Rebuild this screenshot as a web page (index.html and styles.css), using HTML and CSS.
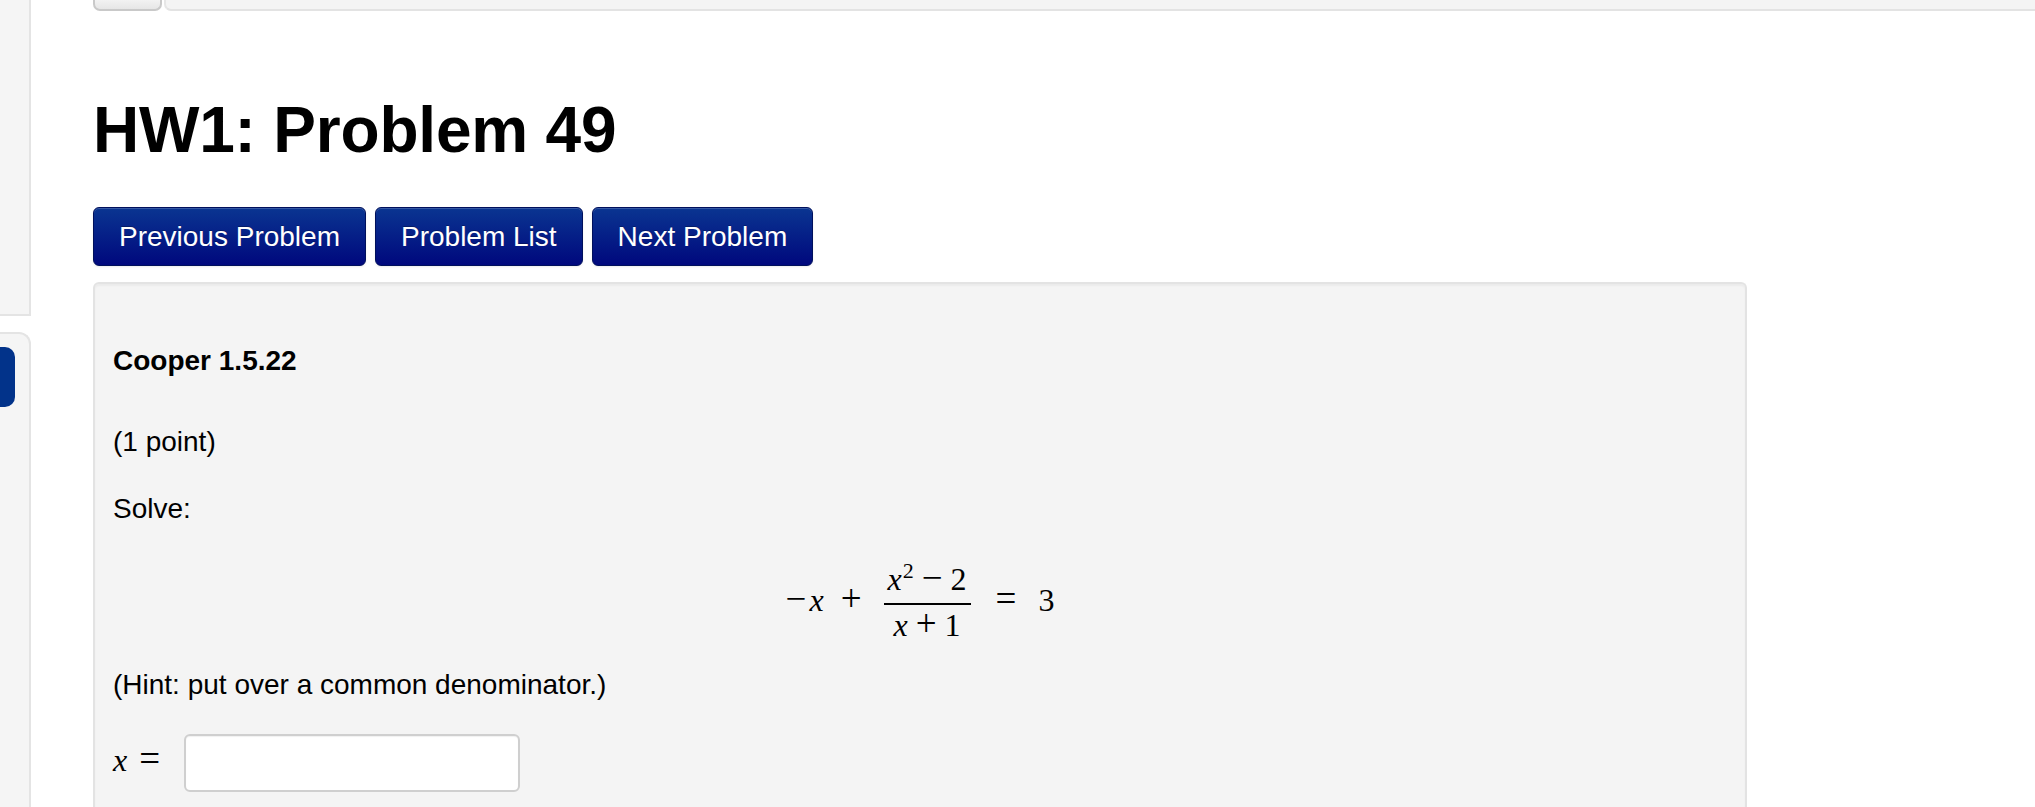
FILE: index.html
```html
<!DOCTYPE html>
<html lang="en">
<head>
<meta charset="utf-8">
<title>HW1: Problem 49</title>
<link rel="stylesheet" href="styles.css">
</head>
<body>
<div class="page">
  <aside class="sidebar">
    <div class="side-top"></div>
    <div class="side-bottom"><span class="side-tab"></span></div>
  </aside>
  <main class="main">
    <div class="topbar">
      <span class="top-btn"></span>
      <div class="top-strip"></div>
    </div>
    <h1 class="title">HW1: Problem 49</h1>
    <nav class="nav-btns">
      <a class="btn" href="#">Previous Problem</a>
      <a class="btn" href="#">Problem List</a>
      <a class="btn" href="#">Next Problem</a>
    </nav>
    <section class="problem">
      <p class="prob-title">Cooper 1.5.22</p>
      <p class="points">(1 point)</p>
      <p class="solve">Solve:</p>
      <div class="equation">
        <span class="mrow"><span class="mo">&minus;</span><span class="mi lead">x</span><span class="mo plus">+</span><span class="frac"><span class="num"><span class="mi">x</span><span class="sup">2</span><span class="mo bin">&minus;</span><span class="mn">2</span></span><span class="bar"></span><span class="den"><span class="mi">x</span><span class="mo bin">+</span><span class="mn">1</span></span></span><span class="mo eq">=</span><span class="mn">3</span></span>
      </div>
      <p class="hint">(Hint: put over a common denominator.)</p>
      <div class="answer-row">
        <span class="answer-label"><span class="mi">x</span><span class="mo ans-eq">=</span></span>
        <input class="answer" type="text" aria-label="answer">
      </div>
    </section>
  </main>
</div>
</body>
</html>
```

FILE: styles.css
```css
html, body {
  margin: 0;
  padding: 0;
  background: #ffffff;
}

body {
  font-family: "Liberation Sans", Arial, Helvetica, sans-serif;
  color: #000;
  overflow: hidden;
}

.page {
  display: flex;
  min-height: 807px;
}

/* ---------- left sidebar ---------- */
.sidebar {
  width: 31px;
  flex: none;
  display: flex;
  flex-direction: column;
}

.side-top {
  height: 316px;
  box-sizing: border-box;
  background: #f5f5f5;
  border-right: 2px solid #e4e4e4;
  border-bottom: 2px solid #e4e4e4;
}

.side-bottom {
  flex: 1;
  margin-top: 16px;
  box-sizing: border-box;
  background: #f5f5f5;
  border-top: 2px solid #e4e4e4;
  border-right: 2px solid #e4e4e4;
  border-top-right-radius: 12px;
  padding-top: 13px;
}

.side-tab {
  display: block;
  width: 15px;
  height: 60px;
  background: #02338a;
  border-radius: 0 10px 10px 0;
}

/* ---------- main column ---------- */
.main {
  flex: 1;
  margin-left: 62px;
  min-width: 0;
}

.topbar {
  display: flex;
  height: 11px;
}

.top-btn {
  width: 69px;
  box-sizing: border-box;
  background: linear-gradient(#f2f2f2, #e6e6e6);
  border: 2px solid #c9c9c9;
  border-top: none;
  border-radius: 0 0 7px 7px;
  margin-right: 2px;
}

.top-strip {
  flex: 1;
  box-sizing: border-box;
  background: #f4f4f4;
  border-left: 2px solid #e6e6e6;
  border-bottom: 2px solid #e3e3e3;
  border-bottom-left-radius: 7px;
}

.title {
  margin: 84px 0 0;
  font-size: 64px;
  line-height: 70px;
  font-weight: bold;
  letter-spacing: -0.2px;
}

.nav-btns {
  display: flex;
  gap: 9px;
  margin-top: 42px;
}

.btn {
  display: block;
  box-sizing: border-box;
  height: 59px;
  padding: 8px 25px;
  font-size: 28px;
  line-height: 41px;
  color: #fff;
  text-decoration: none;
  text-shadow: 0 -1px 0 rgba(0, 0, 0, 0.25);
  background: linear-gradient(#0a3591, #00087d);
  border: 1px solid #00105c;
  border-radius: 6px;
  box-shadow: inset 0 1px 0 rgba(255, 255, 255, 0.18), 0 1px 2px rgba(0, 0, 0, 0.08);
}

/* ---------- problem panel ---------- */
.problem {
  width: 1654px;
  box-sizing: border-box;
  margin-top: 16px;
  min-height: 540px;
  padding: 57px 18px 40px;
  background: #f4f4f4;
  border: 2px solid #e3e3e3;
  border-bottom: none;
  border-radius: 6px 6px 0 0;
  box-shadow: inset 0 2px 2px rgba(0, 0, 0, 0.04);
  font-size: 28px;
  line-height: 40px;
}

.problem p {
  margin: 0;
}

.prob-title {
  font-weight: bold;
}

.points {
  margin-top: 41px !important;
}

.solve {
  margin-top: 27px !important;
}

.hint {
  margin-top: 19px !important;
}

/* ---------- math ---------- */
.equation {
  margin-top: 33px;
  text-align: center;
  font-family: "Liberation Serif", "Times New Roman", serif;
  font-size: 32px;
  line-height: 32px;
}

.mi {
  font-style: italic;
}

.mo {
  font-size: 37px;
}

.lead {
  margin-left: 3px;
}

.plus {
  margin: 0 22px 0 17px;
}

.eq {
  margin: 0 22px 0 25px;
}

.frac {
  display: inline-flex;
  flex-direction: column;
  align-items: center;
  vertical-align: middle;
}

.num {
  padding: 0 4px 8px;
  line-height: 32px;
}

.den {
  padding: 3px 4px 5px;
  line-height: 32px;
}

.bar {
  align-self: stretch;
  height: 2px;
  background: #000;
}

.sup {
  font-size: 22px;
  line-height: 0;
  vertical-align: 12px;
  margin-left: 1px;
}

.bin {
  margin: 0 8px;
}

.answer-row {
  display: flex;
  align-items: center;
  margin-top: 29px;
}

.answer-label {
  font-family: "Liberation Serif", "Times New Roman", serif;
  font-size: 32px;
  line-height: 32px;
  margin-bottom: 8px;
}

.ans-eq {
  margin-left: 12px;
}

.answer {
  margin-left: 24px;
  width: 336px;
  height: 58px;
  box-sizing: border-box;
  background: #fff;
  border: 2px solid #cfcfcf;
  border-radius: 6px;
  box-shadow: inset 0 1px 1px rgba(0, 0, 0, 0.06);
  font-size: 28px;
  padding: 0 10px;
}
```
